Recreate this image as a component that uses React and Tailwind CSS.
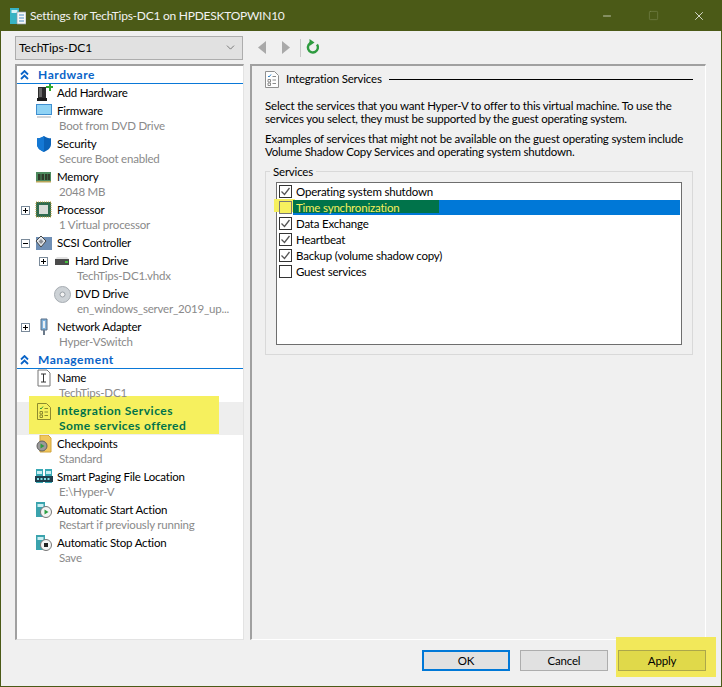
import { ChevronDown, Minus, Square, X } from 'lucide-react'

const FONT = "font-['Lato','Noto_Sans',sans-serif]"

const Svg = ({ children, w = 18, h = 18 }) => (
  <svg width={w} height={h} viewBox={`0 0 ${w} ${h}`} className="shrink-0">{children}</svg>
)

const AddHardwareIcon = () => (
  <Svg>
    <path d="M3 3h8v11H3z" fill="#2c2c2c" />
    <path d="M4 4h3v9H4z" fill="#666" />
    <path d="M2 14h10v3H2z" fill="#1b1b1b" />
    <path d="M11 2h3V0h2v2h2v2h-2v3h-2V4h-3z" fill="#2fa82f" />
  </Svg>
)
const FirmwareIcon = () => (
  <Svg>
    <path d="M1 2h16v11H1z" fill="#3f8fd0" />
    <path d="M2 3h14v9H2z" fill="#8fd3f5" />
    <path d="M2 14h14v2H2z" fill="#d0d4d8" />
  </Svg>
)
const ShieldIcon = () => (
  <Svg>
    <path d="M9 1c2 1.6 4.5 2.3 7 2.3v6c0 3.6-3 6.2-7 7.7-4-1.500-7-4.100-7-7.700v-6C4.500 3.300 7 2.600 9 1z" fill="#0a62b8" />
    <path d="M9 1v16C5 15.500 2 12.900 2 9.300v-6C4.500 3.300 7 2.600 9 1z" fill="#1478d4" />
  </Svg>
)
const MemoryIcon = () => (
  <Svg>
    <path d="M1 4h15v10H1z" fill="#4d8a5e" />
    <path d="M3 6h2.500v6H3zM6.500 6H9v6H6.500zM10 6h2.500v6H10zM13 6h2v6h-2z" fill="#2f3b2a" />
    <path d="M1 13h15v1.500H1z" fill="#b9a65a" />
  </Svg>
)
const ProcessorIcon = () => (
  <Svg>
    <path d="M1 1h15v15H1z" fill="#2f6b4f" />
    <path d="M1 1h15v15H1z" fill="none" stroke="#b99b3a" strokeDasharray="1 1" />
    <path d="M4 4h9v9H4z" fill="#d8dcd8" />
  </Svg>
)
const ScsiIcon = () => (
  <Svg>
    <path d="M1 3h16v13H1z" fill="#6f8fb5" />
    <path d="M6 2l5 5-5 6-5-6z" fill="#e4e8ec" stroke="#444" />
    <path d="M6 5l2.500 2.500L6 10 3.500 7.500z" fill="#8b8f96" />
  </Svg>
)
const HddIcon = () => (
  <Svg>
    <path d="M2 7l2-2h10l2 2z" fill="#e3e3e3" />
    <path d="M2 7h14v6H2z" fill="#4b4b4b" />
    <path d="M12 9h3v2h-3z" fill="#46c13f" />
  </Svg>
)
const DvdIcon = () => (
  <Svg w={17} h={17}>
    <circle cx="8.500" cy="8.500" r="8" fill="#cdd2d6" stroke="#a6acb2" />
    <circle cx="8.500" cy="8.500" r="2.500" fill="#f2f2f2" stroke="#9aa0a6" />
  </Svg>
)
const NetworkIcon = () => (
  <Svg>
    <path d="M6 1h6v11H6z" fill="#7fb2dc" stroke="#5b6f86" />
    <path d="M8 3h2v7H8z" fill="#e9eef3" />
    <path d="M8 12h2v5H8z" fill="#6b7a8a" />
  </Svg>
)
const NameIcon = () => (
  <Svg>
    <path d="M3 1h9l3 3v13H3z" fill="#fff" stroke="#777" />
    <path d="M6 5h5M8.500 5v8M6 13h5" stroke="#333" fill="none" />
  </Svg>
)
const ServicesIcon = ({ color = '#8f8f8f', fill = '#fdfdfd', tick = '#2f82c9', mark = '#8a8a8a' }) => (
  <svg width="14" height="17" viewBox="0 0 14 17" className="shrink-0">
    <path d="M.5.5h9l4 4v12H.5z" fill={fill} stroke={color} />
    <path d="M3 5l1 1 2-2.500" stroke={tick} fill="none" />
    <path d="M7.500 5.500h3.500M7.500 9h3.500M7.500 12.500h3.500" stroke={mark} />
    <path d="M3 8.500h2.500V11H3zM3 12h2.500v2.500H3z" fill="none" stroke={mark} />
  </svg>
)
const CheckpointIcon = () => (
  <Svg>
    <path d="M5 0h8l3 3v14H5z" fill="#f1c75d" stroke="#d2a43c" />
    <circle cx="7" cy="11" r="5" fill="#9a9a9a" stroke="#5f5f5f" />
    <path d="M5.500 8.500l4 2.500-4 2.500z" fill="#2f9c3f" />
  </Svg>
)
const PagingIcon = () => (
  <Svg>
    <path d="M1 1h7v14H1zM10 1h7v14h-7z" fill="#38a9b5" />
    <path d="M2 3h5v3H2zM11 3h5v3h-5z" fill="#c8eef2" />
    <path d="M0 8h18v6H0z" fill="#1f3f4d" />
    <path d="M2 10h2v2H2zM5.500 10h2v2h-2zM9 10h2v2H9zM12.500 10h2v2h-2z" fill="#7fe0e8" />
  </Svg>
)
const ActionIcon = ({ stop }) => (
  <Svg>
    <path d="M1 1h9v15H1z" fill="#3aa3ad" />
    <path d="M2.500 3h6v3h-6z" fill="#c9eef2" />
    <circle cx="11" cy="11" r="5.500" fill="#f4f4f4" stroke="#777" />
    {stop
      ? <path d="M9 9h4v4H9z" fill="#222" />
      : <path d="M9.500 8.500l4 2.500-4 2.500z" fill="#2ea043" />}
  </Svg>
)

const Expander = ({ minus }) => (
  <span className="w-[9px] h-[9px] border border-[#7a8a9a] bg-white relative block shrink-0">
    <span className="absolute left-[1px] right-[1px] top-[3px] h-px bg-black" />
    {!minus && <span className="absolute top-[1px] bottom-[1px] left-[3px] w-px bg-black" />}
  </span>
)

const SectionHeader = ({ label }) => (
  <div className="h-[18px] flex items-center border-b border-[#0a78d7] pl-[3px]">
    <svg width="9" height="10" viewBox="0 0 9 10" className="shrink-0">
      <path d="M1 4.500l3.500-3.500L8 4.500M1 9l3.500-3.500L8 9" fill="none" stroke="#0a64c8" strokeWidth="1.800" />
    </svg>
    <span className="ml-[9px] text-[12px] tracking-[0.55px] font-bold text-[#0a64c8]">{label}</span>
  </div>
)

function TreeItem({ icon, label, sub, expander, minus, indent = 0, subPad = 2, active }) {
  return (
    <div className={`relative ${sub ? 'h-[33px]' : 'h-[18px]'} ${active ? 'bg-[#eeeeee]' : ''}`}>
      <div className="flex items-center h-[18px]" style={{ paddingLeft: 3 + indent }}>
        <span className="w-[15px] flex items-center pl-[1px]">{expander && <Expander minus={minus} />}</span>
        <span className="relative z-10 w-[18px] h-[18px] flex justify-center items-center">{icon}</span>
        <span className={`ml-[4px] leading-none whitespace-nowrap relative z-10 ${active ? 'font-bold text-[#00734a] text-[12px] tracking-[0.5px]' : 'text-black'}`}>{label}</span>
      </div>
      {sub && (
        <div
          className={`h-[15px] leading-[12px] whitespace-nowrap relative z-10 ${active ? 'font-bold text-[#00734a] text-[12px] tracking-[0.45px]' : 'text-[#8a8a8a]'}`}
          style={{ paddingLeft: 40 + indent + subPad }}
        >
          {sub}
        </div>
      )}
    </div>
  )
}

function Sidebar() {
  return (
    <div className="relative w-[229px] shrink-0 bg-white border-t-2 border-l-2 border-[#a0a0a0] border-r border-r-[#e3e3e3] border-b border-b-[#e3e3e3] overflow-hidden">
      <SectionHeader label="Hardware" />
      <TreeItem icon={<AddHardwareIcon />} label="Add Hardware" />
      <TreeItem icon={<FirmwareIcon />} label="Firmware" sub="Boot from DVD Drive" />
      <TreeItem icon={<ShieldIcon />} label="Security" sub="Secure Boot enabled" />
      <TreeItem icon={<MemoryIcon />} label="Memory" sub="2048 MB" />
      <TreeItem icon={<ProcessorIcon />} label="Processor" sub="1 Virtual processor" expander />
      <TreeItem icon={<ScsiIcon />} label="SCSI Controller" expander minus />
      <TreeItem icon={<HddIcon />} label="Hard Drive" sub="TechTips-DC1.vhdx" expander indent={18} />
      <TreeItem icon={<DvdIcon />} label="DVD Drive" sub="en_windows_server_2019_up..." indent={18} />
      <TreeItem icon={<NetworkIcon />} label="Network Adapter" sub="Hyper-VSwitch" expander />
      <SectionHeader label="Management" />
      <TreeItem icon={<NameIcon />} label="Name" sub="TechTips-DC1" />
      <TreeItem icon={<ServicesIcon color="#8c8a2e" fill="#f6f05e" tick="#2f9c3f" mark="#8c8a2e" />} label="Integration Services" sub="Some services offered" active />
      <TreeItem icon={<CheckpointIcon />} label="Checkpoints" sub="Standard" />
      <TreeItem icon={<PagingIcon />} label="Smart Paging File Location" sub="E:\Hyper-V" />
      <TreeItem icon={<ActionIcon />} label="Automatic Start Action" sub="Restart if previously running" />
      <TreeItem icon={<ActionIcon stop />} label="Automatic Stop Action" sub="Save" />
      {/* yellow marker over the selected row */}
      <div className="absolute left-[12px] top-[330px] w-[190px] h-[38px] bg-[#f6f05e]" />
    </div>
  )
}

function ServiceRow({ label, checked, selected }) {
  return (
    <div className="relative h-[16px] flex items-center pl-[1px]">
      <span className={`relative z-10 w-[13px] h-[13px] border flex items-center justify-center shrink-0 ${selected ? 'border-[#777] bg-[#f6f05e]' : 'border-[#333] bg-white'}`}>
        {checked && (
          <svg width="11" height="11" viewBox="0 0 11 11">
            <path d="M1.500 5.500l3 3 5-6.500" fill="none" stroke="#555" strokeWidth="1.300" />
          </svg>
        )}
      </span>
      <span className={`relative z-10 ml-[1px] pl-[3px] leading-[15px] flex-1 whitespace-nowrap ${selected ? 'bg-[#0078d7] text-[#f6f05e]' : 'text-black'}`}>
        {selected && <span className="absolute left-0 top-0 w-[146px] h-[13px] bg-[#00734a]" />}
        <span className="relative">{label}</span>
      </span>
      {selected && <span className="absolute -left-[4px] top-0 w-[21px] h-[13px] bg-[#f6f05e]" />}
    </div>
  )
}

function ServicesPanel() {
  return (
    <div className="flex-1 min-w-0 bg-[#f0f0f0] border-t-2 border-l-2 border-[#a0a0a0] border-r border-r-white border-b border-b-white pl-[13px] pr-[12px] pt-[5px]">
      <div className="flex items-center h-[17px]">
        <ServicesIcon />
        <span className="ml-[7px] whitespace-nowrap -mt-[2px]">Integration Services</span>
        <span className="ml-[7px] flex-1 h-px bg-black" />
      </div>
      <p className="mt-[11px] leading-[13px]">
        Select the services that you want Hyper-V to offer to this virtual machine. To use the services you select, they must be supported by the guest operating system.
      </p>
      <p className="mt-[7px] leading-[13px]">
        Examples of services that might not be available on the guest operating system include Volume Shadow Copy Services and operating system shutdown.
      </p>
      <div className="mt-[13px] h-[184px] border border-[#d9d9d9] px-[10px] pt-[10px] relative">
        <span className="absolute left-[4px] -top-[7px] px-[3px] bg-[#f0f0f0] leading-[13px]">Services</span>
        <div className="h-[163px] bg-white border border-[#6e6e6e] px-px">
          <ServiceRow label="Operating system shutdown" checked />
          <ServiceRow label="Time synchronization" selected />
          <ServiceRow label="Data Exchange" checked />
          <ServiceRow label="Heartbeat" checked />
          <ServiceRow label="Backup (volume shadow copy)" checked />
          <ServiceRow label="Guest services" />
        </div>
      </div>
    </div>
  )
}

export default function App() {
  return (
    <div className={`${FONT} text-[11.5px] tracking-[-0.2px] text-black w-[722px] h-[687px] bg-[#f0f0f0] flex flex-col border-x border-b border-[#4b5a17] overflow-hidden`}>
      {/* Title bar */}
      <div className="h-[31px] shrink-0 -mx-px bg-[#4b5a17] flex items-center pl-[10px] text-[#f2f2f2]">
        <svg width="16" height="18" viewBox="0 0 16 18" className="shrink-0">
          <path d="M0 1h9v16H0z" fill="#37b3c4" />
          <path d="M1.500 3h6v3h-6z" fill="#d7f3f7" />
          <path d="M7 5h9v12H7z" fill="#f7f7f7" stroke="#8a9aa8" strokeWidth=".7" />
          <path d="M9 8h5M9 11h5M9 14h5" stroke="#4a90c8" />
        </svg>
        <span className="ml-[4px] text-[12px] tracking-[-0.25px] whitespace-nowrap">Settings for TechTips-DC1 on HPDESKTOPWIN10</span>
        <div className="ml-auto flex items-center text-white">
          <span className="w-[46px] flex justify-center"><Minus size={12} strokeWidth={1.300} /></span>
          <span className="w-[46px] flex justify-center text-[#7f8c57]"><Square size={11} strokeWidth={1.200} /></span>
          <span className="w-[46px] flex justify-center"><X size={14} strokeWidth={1.300} /></span>
        </div>
      </div>

      {/* Toolbar */}
      <div className="h-[33px] shrink-0 flex items-center pl-[14px]">
        <div className="w-[228px] h-[24px] bg-[#e1e1e1] border border-[#adadad] flex items-center justify-between pl-[3px] pr-[5px] text-[12px] tracking-normal">
          <span>TechTips-DC1</span>
          <ChevronDown size={13} strokeWidth={1.200} className="text-[#444]" />
        </div>
        <svg width="66" height="18" viewBox="0 0 66 18" className="ml-[15px]">
          <path d="M8 2v13L0 8.500z" fill="#a9a9a9" />
          <path d="M24 2v13l8-6.500z" fill="#a9a9a9" />
          <path d="M42.500 0v18" stroke="#c8c8c8" />
          <path d="M54 3.500a5 5 0 1 0 5 2" fill="none" stroke="#2e9b3f" strokeWidth="2.400" />
          <path d="M51.500 0l5 3.500-5 3.500z" fill="#2e9b3f" />
        </svg>
      </div>

      {/* Main panels */}
      <div className="h-[576px] shrink-0 flex gap-[6px] pl-[14px] pr-[15px]">
        <Sidebar />
        <ServicesPanel />
      </div>

      {/* Footer buttons */}
      <div className="relative flex-1 flex justify-end items-start gap-[10px] pt-[10px] pr-[15px]">
        <button className="w-[88px] h-[21px] bg-[#e1e1e1] border-2 border-[#0078d7] leading-none">OK</button>
        <button className="w-[88px] h-[21px] bg-[#e1e1e1] border border-[#adadad] leading-none">Cancel</button>
        <div className="relative w-[88px] h-[21px]">
          <div className="absolute -left-[2px] -right-[10px] -top-[13px] h-[40px] bg-[#f2e85a]" />
          <button className="relative w-full h-full bg-[#e0d94a] border border-[#aca74a] leading-none">Apply</button>
        </div>
      </div>
    </div>
  )
}
